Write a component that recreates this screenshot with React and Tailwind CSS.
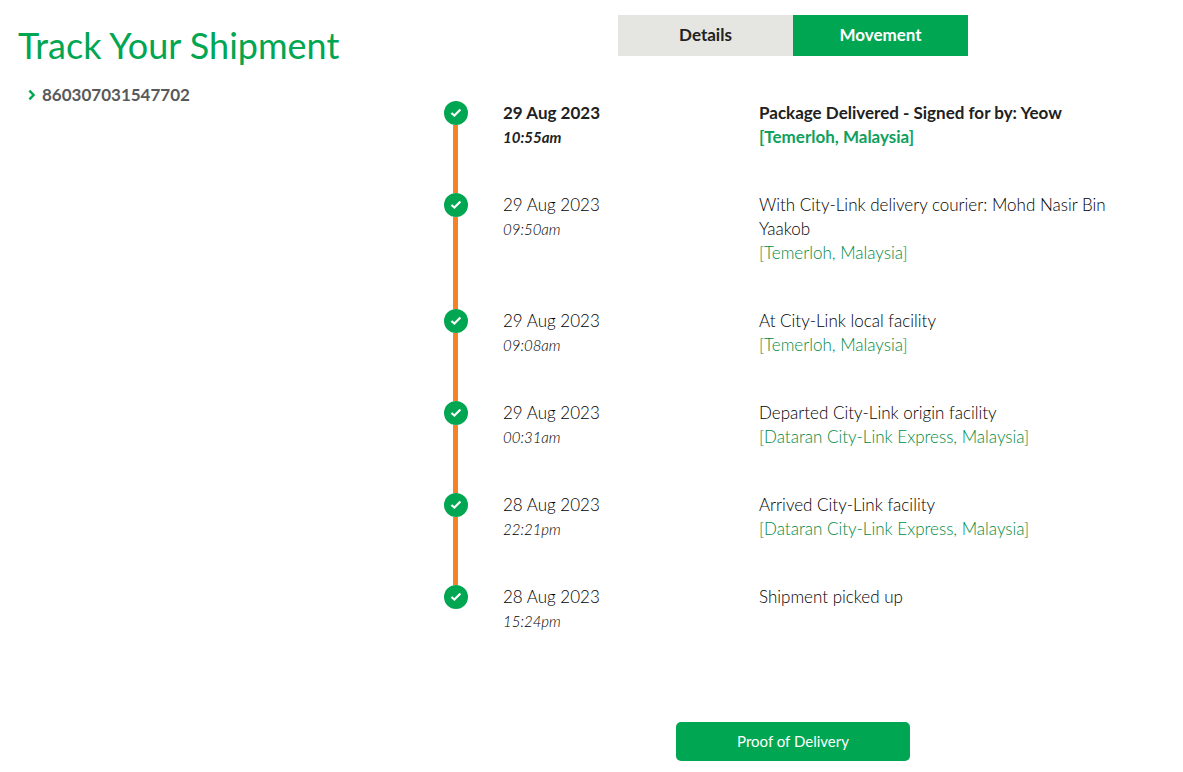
import React from "react";

const events = [
  { date: "29 Aug 2023", time: "10:55am", text: "Package Delivered - Signed for by: Yeow", place: "[Temerloh, Malaysia]" },
  { date: "29 Aug 2023", time: "09:50am", text: "With City-Link delivery courier: Mohd Nasir Bin Yaakob", place: "[Temerloh, Malaysia]" },
  { date: "29 Aug 2023", time: "09:08am", text: "At City-Link local facility", place: "[Temerloh, Malaysia]" },
  { date: "29 Aug 2023", time: "00:31am", text: "Departed City-Link origin facility", place: "[Dataran City-Link Express, Malaysia]" },
  { date: "28 Aug 2023", time: "22:21pm", text: "Arrived City-Link facility", place: "[Dataran City-Link Express, Malaysia]" },
  { date: "28 Aug 2023", time: "15:24pm", text: "Shipment picked up", place: "" },
];

function Marker({ isLast }) {
  return (
    <div className="flex flex-col w-6 shrink-0">
      <span className="flex items-center justify-center w-6 h-6 rounded-full bg-[#00a651]">
        <svg viewBox="0 0 12 12" className="w-3 h-3" fill="none" stroke="white" strokeWidth="2.2" aria-hidden="true">
          <path d="M1.4 6 L4.4 8.6 L10.4 2.4" />
        </svg>
      </span>
      {!isLast && <span className="w-[5px] ml-[9px] flex-1 bg-[#f98125]" />}
    </div>
  );
}

function TimelineRow({ event, latest, isLast }) {
  return (
    <li className="flex gap-[35px]">
      <Marker isLast={isLast} />
      <div className={`flex flex-1 pb-11 leading-6 ${latest ? "font-bold" : "font-light text-black"}`}>
        <div className="flex-2">
          <p>{event.date}</p>
          <p className="text-[15px] leading-6 italic">{event.time}</p>
        </div>
        <div className="flex-3">
          <p>{event.text}</p>
          {event.place && <p className={latest ? "text-[#109f5d]" : "text-[#008a43]"}>{event.place}</p>}
        </div>
      </div>
    </li>
  );
}

export default function App() {
  return (
    <main className="flex pl-[13px] bg-white text-[#212121] text-[17px] leading-6 font-[Lato,'Open_Sans',sans-serif]">
      <aside className="w-1/3 pl-[5px] pt-[23px]">
        <h1 className="text-[36px] leading-[44px] text-[#00a651]">Track Your Shipment</h1>
        <a href="#860307031547702" className="flex items-center gap-1 mt-4 pl-2 font-bold text-[#58595b]">
          <svg viewBox="0 0 12 12" className="w-3 h-3" fill="none" stroke="#00a651" strokeWidth="2.4" aria-hidden="true">
            <path d="M3.4 1.6 L7.6 6 L3.4 10.4" />
          </svg>
          860307031547702
        </a>
      </aside>

      <section className="w-2/3 pt-[15px]">
        <div role="tablist" className="flex justify-center">
          <button type="button" role="tab" aria-selected="false" className="w-[175px] h-[41px] pb-0.5 bg-[#e5e5e2] font-bold">Details</button>
          <button type="button" role="tab" aria-selected="true" className="w-[175px] h-[41px] pb-0.5 bg-[#00a651] text-white font-bold">Movement</button>
        </div>

        <ol className="mt-[45px] pl-[41px] pr-10">
          {events.map((event, i) => (
            <TimelineRow key={event.date + event.time} event={event} latest={i === 0} isLast={i === events.length - 1} />
          ))}
        </ol>

        <div className="flex justify-center mt-[45px] pb-[11px]">
          <button type="button" className="w-[234px] h-[39px] pb-0.5 rounded-[5px] bg-[#00a651] text-white text-[15px]">Proof of Delivery</button>
        </div>
      </section>
    </main>
  );
}
